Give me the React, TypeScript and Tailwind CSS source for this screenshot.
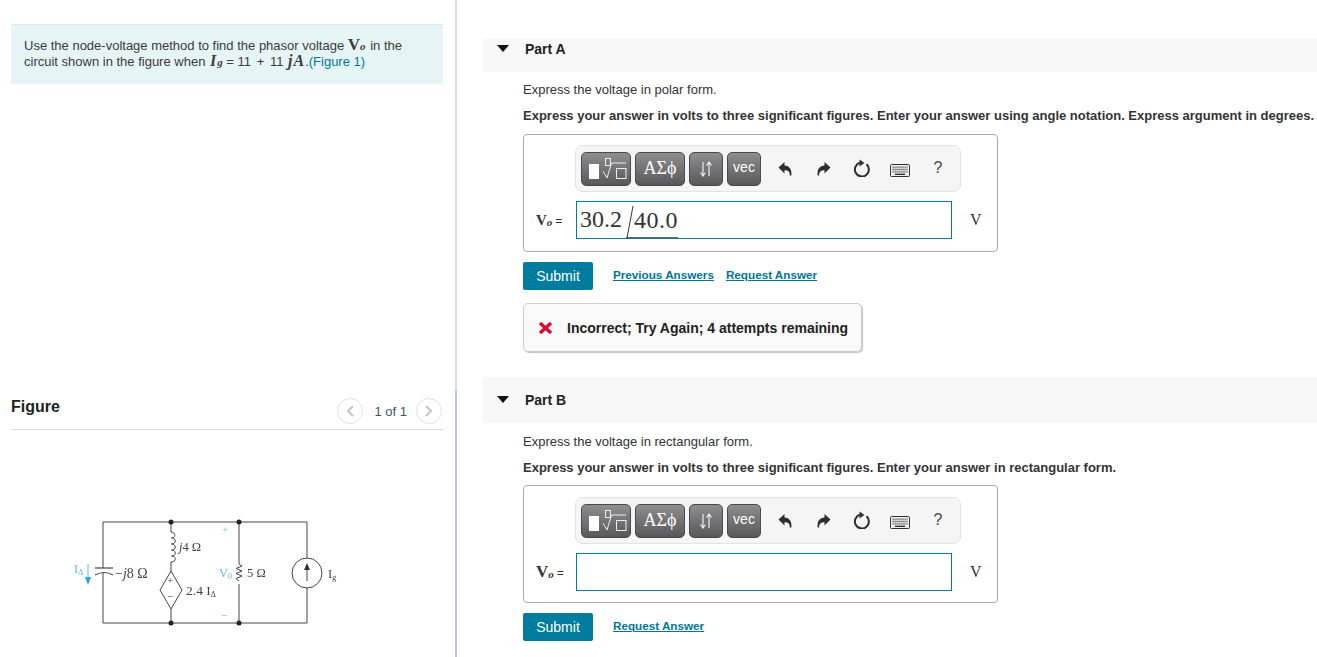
const sans = "font-['Liberation_Sans',Arial,sans-serif]";

function Triangle() {
  return (
    <svg width="12" height="7" viewBox="0 0 12 7" className="shrink-0">
      <path d="M0 0h12L6 7z" fill="#111" />
    </svg>
  );
}

function UndoIcon({ flip }: { flip?: boolean }) {
  return (
    <svg width="16" height="16" viewBox="0 0 16 16" className={flip ? "-scale-x-100" : ""}>
      <path d="M1.500 6.500L7.500 1v3.400c4 .2 7 2.600 7 8.600 0 .6-.1 1.200-.2 1.600h-1.500c.3-3.600-1.600-5.400-5.300-5.400V12.500z" fill="#2e2e2e" />
    </svg>
  );
}

function ResetIcon() {
  return (
    <svg width="18" height="18" viewBox="0 0 18 18">
      <path d="M6.800 3.800A7 7 0 1 0 13.500 5.200" fill="none" stroke="#2e2e2e" strokeWidth="2" />
      <path d="M6.500 0.500L11.500 4L6.500 7.500z" fill="#2e2e2e" />
    </svg>
  );
}

function KeyboardIcon() {
  return (
    <svg width="20" height="13" viewBox="0 0 20 13">
      <rect x="0.500" y="0.500" width="19" height="12" rx="1" fill="#efefef" stroke="#333" />
      <path d="M2.500 3.200h15M2.500 5.500h15M2.500 7.800h15" stroke="#444" strokeWidth="1.300" strokeDasharray="1.200 .8" />
      <path d="M5 10.300h10" stroke="#333" strokeWidth="1.400" />
    </svg>
  );
}

function Toolbar() {
  const btn =
    "h-[34px] rounded-[5px] border border-[#4a4a4a] bg-gradient-to-b from-[#8e8e90] to-[#59595b] flex items-center justify-center text-white";
  return (
    <div className="ml-[51px] w-[386px] h-[47px] rounded-[7px] border border-[#e4e4e4] bg-[#f5f5f5] flex items-center pl-[5px]">
      <div className={`${btn} w-[50px]`}>
        <svg width="42" height="28" viewBox="0 0 42 28">
          <rect x="4" y="9" width="10" height="15" fill="#fff" />
          <rect x="20.500" y="3.500" width="5" height="7" fill="none" stroke="#eee" />
          <path d="M18 16l4 7 4.500-15H41" fill="none" stroke="#eee" strokeWidth="1" />
          <rect x="31.500" y="13.500" width="9.500" height="10" fill="none" stroke="#eee" />
        </svg>
      </div>
      <div className={`${btn} w-[50px] ml-1 font-['Liberation_Serif',serif] text-[18px]`}>ΑΣϕ</div>
      <div className={`${btn} w-[34px] ml-1`}>
        <svg width="14" height="16" viewBox="0 0 14 16">
          <path d="M4 1v13M1.500 11.500L4 15l2.500-3.500M10 15V2M7.500 4.500L10 1l2.500 3.500" fill="none" stroke="#eee" strokeWidth="1.200" />
        </svg>
      </div>
      <div className={`${btn} w-[34px] ml-1 text-[14px] pb-[3px] ${sans}`}>vec</div>
      <div className="ml-[16px] w-[16px] flex justify-center">
        <UndoIcon />
      </div>
      <div className="ml-[23px] w-[16px] flex justify-center">
        <UndoIcon flip />
      </div>
      <div className="ml-[21px] w-[18px] flex justify-center -translate-y-[1px]">
        <ResetIcon />
      </div>
      <div className="ml-[19px] w-[20px] flex justify-center translate-y-[2px]">
        <KeyboardIcon />
      </div>
      <div className="ml-[23px] text-[16px] text-[#444] w-[10px] text-center -translate-y-[1px]">?</div>
    </div>
  );
}

function VLabel({ large }: { large?: boolean }) {
  return (
    <div className={`w-[52px] pl-3 flex items-baseline font-['Liberation_Serif',serif] text-[#333] ${large ? "text-[17px]" : "text-[15px]"}`}>
      <b>V</b>
      <i className="text-[11px] font-bold translate-y-[1px]">o</i>
      <span className={`ml-[3px] text-[12px] ${sans}`}>=</span>
    </div>
  );
}

function AnswerBox({ children, large }: { children?: React.ReactNode; large?: boolean }) {
  return (
    <div className={`w-[475px] h-[118px] rounded-[4px] border border-[#aaaaaa] ${large ? "pt-[11px]" : "pt-[10px]"}`}>
      <Toolbar />
      <div className="flex items-center mt-[9px]">
        <VLabel large={large} />
        <div className="w-[376px] h-[38px] border border-[#007c9e] flex items-center pl-[3px] font-['Liberation_Serif',serif] text-[24px] text-[#333]">
          {children}
        </div>
        <div className="ml-[18px] font-['Liberation_Serif',serif] text-[16px] text-[#333]">V</div>
      </div>
    </div>
  );
}

function Circuit() {
  return (
    <svg width="290" height="130" viewBox="60 505 290 130" className="blur-[0.3px]">
      <g fill="none" stroke="#444" strokeWidth="1">
        <path d="M103 568V522H307V558M307 588V623H103V573" />
        <path d="M171 522V532M171 562V571M171 609V623M239 522V564M239 584V623" />
        <path d="M171 532c5 0 5 6 .5 6c5 0 5 6 0 6c5 0 5 6 0 6c5 0 5 6 0 6c5 0 5 6 -.5 6" />
        <path d="M239 564l3 2-6 2.500 6 2.500-6 2.500 6 2.500-6 2.500 3 2.500" />
        <path d="M171 571l11 19-11 19-11-19z" />
        <circle cx="307" cy="573" r="15" />
        <path d="M95 568H113" strokeWidth="1.200" />
        <path d="M95 575q9-5 18 0" strokeWidth="1.200" />
        <path d="M307 581V568" />
      </g>
      <path d="M307 563l-3 7h6z" fill="#333" />
      <g fill="#222">
        <circle cx="171" cy="522" r="2.500" />
        <circle cx="239" cy="522" r="2.500" />
        <circle cx="171" cy="623" r="2.500" />
        <circle cx="239" cy="623" r="2.500" />
      </g>
      <path d="M88 564V580" stroke="#5bbde4" strokeWidth="1" />
      <path d="M85 577h6l-3 8z" fill="#22a7e0" />
      <g fontFamily="Liberation Serif, serif" fontSize="12.500" fill="#444">
        <text x="179" y="551"><tspan fontStyle="italic">j</tspan>4 Ω</text>
        <text x="115" y="578" fontSize="14">−<tspan fontStyle="italic">j</tspan>8 Ω</text>
        <text x="247" y="577">5 Ω</text>
        <text x="186" y="595" fontSize="13.500">2.4 I<tspan fontSize="8" dy="2">Δ</tspan></text>
        <text x="328" y="578">I<tspan fontSize="8" dy="2">g</tspan></text>
        <text x="167" y="584" fontSize="11">+</text>
        <text x="167" y="600" fontSize="11">−</text>
      </g>
      <g fontFamily="Liberation Serif, serif" fontSize="12.500" fill="#5bbde4">
        <text x="74" y="573">I<tspan fontSize="8" dy="2">Δ</tspan></text>
        <text x="219" y="577">V<tspan fontSize="8" dy="2">0</tspan></text>
        <text x="222" y="533" fontSize="11">+</text>
        <text x="221" y="619" fontSize="11">−</text>
      </g>
    </svg>
  );
}

function Chevron({ dir }: { dir: "l" | "r" }) {
  return (
    <div className="w-[26px] h-[26px] rounded-full border border-[#e2e2e2] flex items-center justify-center">
      <svg width="10" height="14" viewBox="0 0 10 14">
        <path d={dir === "l" ? "M8 2L3 7l5 5" : "M2 2l5 5-5 5"} fill="none" stroke="#c4c4c4" strokeWidth="2" />
      </svg>
    </div>
  );
}

export default function App() {
  const link = "text-[#00759a] underline font-bold pb-[2px]";
  const mathSerif = "font-['Liberation_Serif',serif] font-bold leading-[0]";
  return (
    <div className={`h-[657px] w-[1317px] overflow-hidden bg-white flex ${sans} text-[#333]`}>
      <div className="w-[457px] shrink-0 h-full flex flex-col pt-6 relative">
        <div className="absolute right-0 top-0 h-[390px] w-[2px] bg-[#d6dfeb]" />
        <div className="absolute right-0 top-[390px] h-[267px] w-[2px] bg-[#b9c8dc]" />
        <div className="ml-[11px] w-[432px] h-[60px] bg-[#e5f5f6] border-t border-[#dfe5e6] px-[13px] pt-[13px] text-[13px] leading-[16px] text-[#3b3b3b]">
          <p>
            Use the node-voltage method to find the phasor voltage{" "}
            <span className={`${mathSerif} text-[17px]`}>V</span>
            <i className={`${mathSerif} text-[11px] mr-[1px]`}>o</i> in the
          </p>
          <p>
            circuit shown in the figure when{" "}
            <i className={`${mathSerif} text-[16px] ml-[1px]`}>I</i>
            <i className={`${mathSerif} text-[11px] ml-[1px]`}>g</i> = 11{" "}
            <span className="mx-[2px]">+</span> 11{" "}
            <i className={`${mathSerif} text-[16px] ml-[1px] tracking-[1px]`}>jA</i>.
            <span className="text-[#00759a]">(Figure 1)</span>
          </p>
        </div>
        <div className="ml-[11px] w-[432px] h-[40px] mt-[306px] border-b border-[#dcdcdc] flex items-center pt-[2px]">
          <h2 className="font-bold text-[16px] text-[#222] -translate-y-[4px]">Figure</h2>
          <div className="ml-auto flex items-center text-[13px] text-[#3d5368] mr-[1px]">
            <Chevron dir="l" />
            <span className="mx-[10px] translate-y-[1px] translate-x-[1px]">1 of 1</span>
            <Chevron dir="r" />
          </div>
        </div>
        <div className="mt-[75px] ml-[60px]">
          <Circuit />
        </div>
      </div>

      <div className="flex-1 pt-[38px] pl-[26px] min-w-0">
        <div className="h-[34px] bg-[#f8f8f8] flex pl-[14px]">
          <div className="pt-[7px]">
            <Triangle />
          </div>
          <span className="ml-[16px] font-bold text-[14px] leading-[20px] text-[#222] pt-[1px]">Part A</span>
        </div>
        <div className="pl-[40px]">
          <p className="mt-[10px] text-[13px] leading-[16px]">Express the voltage in polar form.</p>
          <p className="mt-[10px] text-[13px] leading-[16px] font-bold whitespace-nowrap">
            Express your answer in volts to three significant figures. Enter your answer using angle notation. Express argument in degrees.
          </p>
          <div className="mt-[10px]">
            <AnswerBox>
              <span className="-translate-y-[1px]">30.2</span>
              <span className="relative ml-[4px] pl-[8px] h-[33px] mt-[2px] border-b border-[#666] leading-[31px] tracking-[0.5px]">
                <svg width="8" height="33" viewBox="0 0 8 33" className="absolute left-0 top-0">
                  <path d="M7 1L1 33" stroke="#333" strokeWidth="1" />
                </svg>
                40.0
              </span>
            </AnswerBox>
          </div>
          <div className="mt-[10px] flex items-center text-[11.700px]">
            <button className="w-[70px] h-[28px] bg-[#007c9e] rounded-[2px] text-white text-[14px]">Submit</button>
            <a className={`ml-[20px] ${link}`}>Previous Answers</a>
            <a className={`ml-[12px] ${link}`}>Request Answer</a>
          </div>
          <div className="mt-[13px] w-[339px] h-[49px] rounded-[5px] border border-[#cccccc] bg-[#f9f9f9] shadow-[1px_1px_1px_#c4c4c4] flex items-center pl-[14px]">
            <svg width="15" height="14" viewBox="0 0 15 14">
              <path d="M2 2l11 10M13 2L2 12" stroke="#dc0a32" strokeWidth="3.400" />
            </svg>
            <span className="ml-[14px] font-bold text-[14px] text-[#222] translate-y-[1px]">Incorrect; Try Again; 4 attempts remaining</span>
          </div>
        </div>

        <div className="mt-[25px] h-[46px] bg-[#f8f8f8] flex pl-[14px]">
          <div className="pt-[19px]">
            <Triangle />
          </div>
          <span className="ml-[16px] font-bold text-[14px] leading-[20px] text-[#222] pt-[13px]">Part B</span>
        </div>
        <div className="pl-[40px]">
          <p className="mt-[11px] text-[13px] leading-[16px]">Express the voltage in rectangular form.</p>
          <p className="mt-[10px] text-[13px] leading-[16px] font-bold whitespace-nowrap">
            Express your answer in volts to three significant figures. Enter your answer in rectangular form.
          </p>
          <div className="mt-[9px]">
            <AnswerBox large />
          </div>
          <div className="mt-[10px] flex items-center text-[11.700px]">
            <button className="w-[70px] h-[28px] bg-[#007c9e] rounded-[2px] text-white text-[14px]">Submit</button>
            <a className={`ml-[20px] ${link}`}>Request Answer</a>
          </div>
        </div>
      </div>
    </div>
  );
}
